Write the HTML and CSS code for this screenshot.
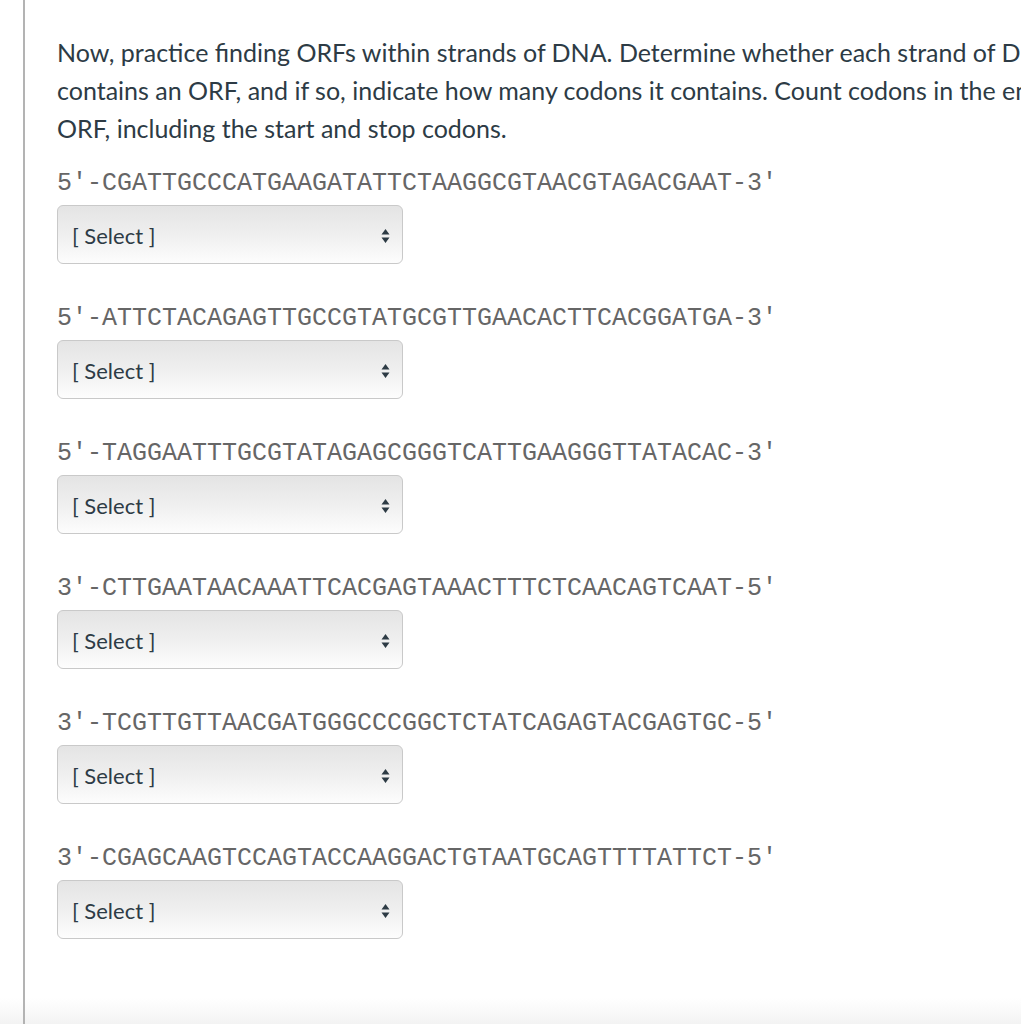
FILE: index.html
```html
<!DOCTYPE html>
<html>
<head>
<meta charset="utf-8">
<link rel="stylesheet" href="styles.css">
</head>
<body>
<div class="page">
  <div class="content">
    <p class="intro">Now, practice finding ORFs within strands of DNA. Determine whether each strand of DNA contains an ORF, and if so, indicate how many codons it contains. Count codons in the entire ORF, including the start and stop codons.</p>

    <div class="item">
      <div class="seq">5'-CGATTGCCCATGAAGATATTCTAAGGCGTAACGTAGACGAAT-3'</div>
      <div class="select"><span>[ Select ]</span><svg class="arrows" width="9" height="16" viewBox="0 0 9 16"><path d="M4.5 1 L8.5 6.5 H0.5 Z M0.5 9.5 H8.5 L4.5 15 Z" fill="#2d3b45"/></svg></div>
    </div>
    <div class="item">
      <div class="seq">5'-ATTCTACAGAGTTGCCGTATGCGTTGAACACTTCACGGATGA-3'</div>
      <div class="select"><span>[ Select ]</span><svg class="arrows" width="9" height="16" viewBox="0 0 9 16"><path d="M4.5 1 L8.5 6.5 H0.5 Z M0.5 9.5 H8.5 L4.5 15 Z" fill="#2d3b45"/></svg></div>
    </div>
    <div class="item">
      <div class="seq">5'-TAGGAATTTGCGTATAGAGCGGGTCATTGAAGGGTTATACAC-3'</div>
      <div class="select"><span>[ Select ]</span><svg class="arrows" width="9" height="16" viewBox="0 0 9 16"><path d="M4.5 1 L8.5 6.5 H0.5 Z M0.5 9.5 H8.5 L4.5 15 Z" fill="#2d3b45"/></svg></div>
    </div>
    <div class="item">
      <div class="seq">3'-CTTGAATAACAAATTCACGAGTAAACTTTCTCAACAGTCAAT-5'</div>
      <div class="select"><span>[ Select ]</span><svg class="arrows" width="9" height="16" viewBox="0 0 9 16"><path d="M4.5 1 L8.5 6.5 H0.5 Z M0.5 9.5 H8.5 L4.5 15 Z" fill="#2d3b45"/></svg></div>
    </div>
    <div class="item">
      <div class="seq">3'-TCGTTGTTAACGATGGGCCCGGCTCTATCAGAGTACGAGTGC-5'</div>
      <div class="select"><span>[ Select ]</span><svg class="arrows" width="9" height="16" viewBox="0 0 9 16"><path d="M4.5 1 L8.5 6.5 H0.5 Z M0.5 9.5 H8.5 L4.5 15 Z" fill="#2d3b45"/></svg></div>
    </div>
    <div class="item">
      <div class="seq">3'-CGAGCAAGTCCAGTACCAAGGACTGTAATGCAGTTTTATTCT-5'</div>
      <div class="select"><span>[ Select ]</span><svg class="arrows" width="9" height="16" viewBox="0 0 9 16"><path d="M4.5 1 L8.5 6.5 H0.5 Z M0.5 9.5 H8.5 L4.5 15 Z" fill="#2d3b45"/></svg></div>
    </div>
  </div>
</div>
</body>
</html>
```

FILE: styles.css
```css
html, body {
  margin: 0;
  padding: 0;
}
body {
  width: 1021px;
  height: 1024px;
  overflow: hidden;
  background: linear-gradient(to bottom, #ffffff 0, #ffffff 998px, #f3f3f3 1024px);
  font-family: Lato, "Open Sans", sans-serif;
  color: #2d3b45;
}
.page {
  margin-left: 23px;
  border-left: 2px solid #b3b3b3;
  height: 1024px;
  overflow: hidden;
}
.content {
  width: 1045px;
  padding: 33px 0 0 32px;
}
.intro {
  margin: 0 0 22px 0;
  font-size: 25px;
  line-height: 38px;
}
.item {
  display: flex;
  flex-direction: column;
  align-items: flex-start;
  gap: 6px;
  margin-bottom: 40px;
}
.seq {
  font-family: "Courier New", "Nimbus Mono PS", "FreeMono", "Liberation Mono", monospace;
  font-size: 25px;
  line-height: 30px;
  color: #666666;
  white-space: nowrap;
}
.select {
  box-sizing: border-box;
  width: 346px;
  height: 59px;
  border: 1px solid #c9c9c9;
  border-radius: 6px;
  background: linear-gradient(to bottom, #e4e4e4 0%, #efefef 50%, #fdfdfd 100%);
  display: flex;
  align-items: center;
  justify-content: space-between;
  padding: 2px 12px 0 14px;
  font-size: 22px;
}
.arrows {
  display: block;
}
```
